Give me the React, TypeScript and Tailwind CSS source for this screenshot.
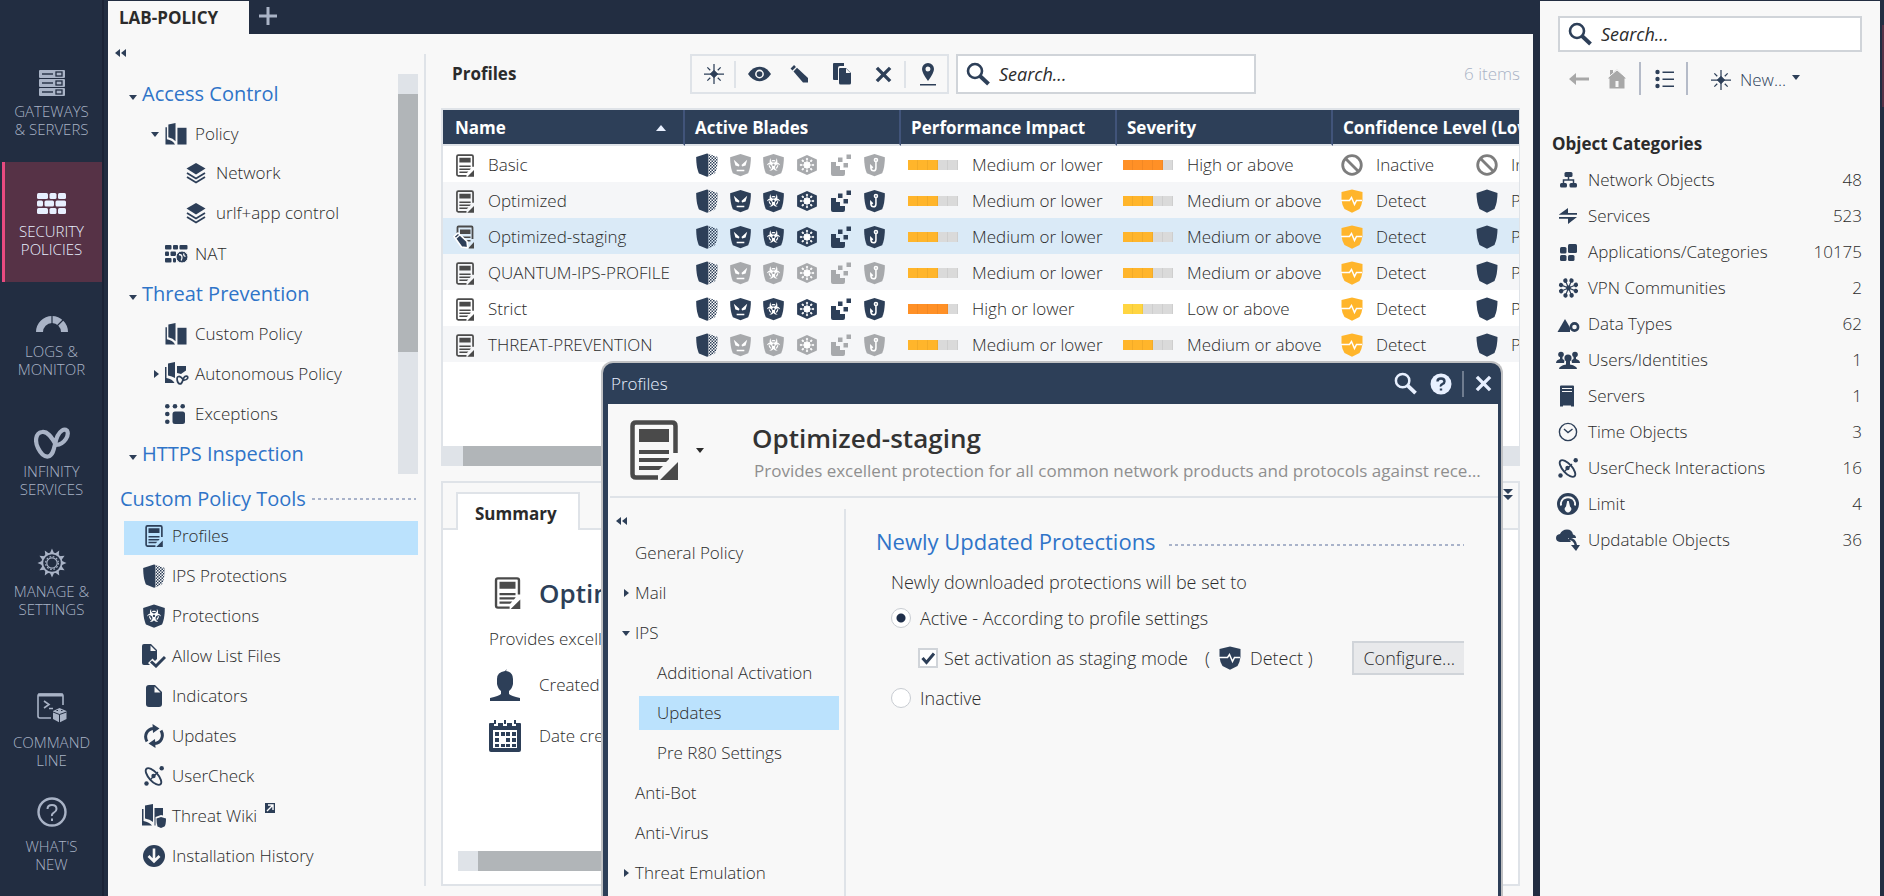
import React, { useState } from "react";
import { FaBiohazard } from "react-icons/fa";

type IconProps = { className?: string };

/* ---------- icons ---------- */

const ArrowDown: React.FC<IconProps> = ({ className = "" }) => (
    <svg viewBox="0 0 8 5" className={`w-2 h-[5px] shrink-0 ${className}`} fill="currentColor"><path d="M0 0h8L4 5z" /></svg>
);

const ArrowRight: React.FC<IconProps> = ({ className = "" }) => (
    <svg viewBox="0 0 5 8" className={`w-[5px] h-2 shrink-0 ${className}`} fill="currentColor"><path d="M0 0v8l5-4z" /></svg>
);

const CollapseIcon = () => (
    <svg viewBox="0 0 11 8" className="w-[11px] h-2" fill="currentColor"><path d="M5 0v8L0 4zM11 0v8L6 4z" /></svg>
);

const DocIcon: React.FC<IconProps> = ({ className = "" }) => (
    <svg viewBox="0 0 48 60" className={`shrink-0 ${className}`} fill="currentColor">
        <path d="M28 57.500H6q-3.500 0-3.500-3.500V6q0-3.500 3.500-3.500H42q3.500 0 3.500 3.500V33" fill="none" stroke="currentColor" strokeWidth="4.500" />
        <path d="M9 9h30v13H9zM9 30h30v4H9zM9 38h30v1l-3 3H9zM9 46h24l-4 4H9zM48 42v18H30z" />
    </svg>
);

const DocEditIcon: React.FC<IconProps> = ({ className = "" }) => (
    <svg viewBox="0 0 22 24" className={`shrink-0 ${className}`} fill="none">
        <path d="M4.500 8V2.500q0-1 1-1h13q1 0 1 1V14" stroke="#4a4a4a" strokeWidth="1.800" />
        <path d="M7 4.500h10.500v4.500H7zM10 11.500h7.500V13H10zM12 15h5.500v1.400H12zM21 17v6.500h-6z" fill="#4a4a4a" />
        <path d="M1 11.500L5 8l9 8.500.8 6.300-6.300-.8z" fill="#2d3f58" stroke="#fff" strokeWidth="1.600" />
        <path d="M2.800 13.500L7 9.800" stroke="#fff" strokeWidth="1.200" />
    </svg>
);

const SHIELD = "M12 .5 22.800 4C22.800 12 21.500 17.500 20 20.500L12 23.800 4 20.500C2.500 17.500 1.200 12 1.200 4z";

const IpsIcon: React.FC<IconProps> = ({ className = "" }) => (
    <svg viewBox="0 0 24 24" className={`w-6 h-6 shrink-0 ${className}`} fill="#2d3f58">
        <defs>
            <pattern id="ipsDots" width="3" height="3" patternUnits="userSpaceOnUse">
                <rect width="1.500" height="1.500" />
                <rect x="1.500" y="1.500" width="1.500" height="1.500" />
            </pattern>
        </defs>
        <path d="M13 .8V23.500L12 23.800 4 20.500C2.500 17.500 1.200 12 1.200 4L12 .5z" />
        <path d="M13 .8 22.800 4C22.800 12 21.500 17.500 20 20.500L13 23.500z" fill="url(#ipsDots)" />
    </svg>
);

const BotIcon: React.FC<IconProps> = ({ className = "" }) => (
    <svg viewBox="0 0 24 24" className={`shrink-0 ${className}`} fill="currentColor">
        <path d={SHIELD} />
        <path d="M5 6.500l6 5.500-.8 1.500-3.500-1zM19 6.500l-6 5.500.8 1.500 3.500-1zM8 17h8v1.600H8z" fill="#fff" />
    </svg>
);

const BioIcon: React.FC<IconProps> = ({ className = "" }) => (
    <svg viewBox="0 0 24 24" className={`shrink-0 ${className}`} fill="currentColor">
        <path d={SHIELD} />
        <g className="text-white"><FaBiohazard x={5} y={4.500} size={14} /></g>
    </svg>
);

const RAYS = [0, 45, 90, 135, 180, 225, 270, 315];

const EmulationIcon: React.FC<IconProps> = ({ className = "" }) => (
    <svg viewBox="0 0 24 24" className={`shrink-0 ${className}`} fill="currentColor">
        <path d="M12 1 22.800 6v12L12 23 1.200 18V6z" />
        <g fill="#fff" stroke="#fff">
            <circle cx="12" cy="12" r="3.400" />
            {RAYS.map((a) => (
                <g key={a} transform={`rotate(${a} 12 12)`}>
                    <path d="M12 9V6" strokeWidth=".8" />
                    <circle cx="12" cy="5.400" r=".8" />
                </g>
            ))}
        </g>
    </svg>
);

const ExtractionIcon: React.FC<IconProps> = ({ className = "" }) => (
    <svg viewBox="0 0 24 24" className={`shrink-0 ${className}`} fill="currentColor">
        <path d="M2 9h5v4h4v4h5v4q0 2-2 2H4q-2 0-2-2zM9 4.500h4.500V9H9zM17.500 1.500h4.500V6h-4.500zM14.500 10h4.500v4.500h-4.500z" />
    </svg>
);

const PhishingIcon: React.FC<IconProps> = ({ className = "" }) => (
    <svg viewBox="0 0 24 24" className={`shrink-0 ${className}`} fill="currentColor">
        <path d={SHIELD} />
        <g fill="none" stroke="#fff" strokeWidth="1.600">
            <circle cx="13.500" cy="6.800" r="1.600" />
            <path d="M13.500 8.500V15q0 3-2.500 3t-2.800-3V13l2 2" />
        </g>
    </svg>
);

const DetectIcon: React.FC<IconProps> = ({ className = "" }) => (
    <svg viewBox="0 0 24 24" className={`shrink-0 ${className}`} fill="currentColor">
        <path d="M12 .5 22.500 3V11q-.6 5-3 9L12 23.800 4.500 20Q2 16 1.500 11V3z" />
        <path d="M1 11.500h8.500l2-3 3 7 2-4H22" fill="none" stroke="#fff" strokeWidth="1.500" />
    </svg>
);

const PreventIcon: React.FC<IconProps> = ({ className = "" }) => (
    <svg viewBox="0 0 24 24" className={`shrink-0 ${className}`} fill="currentColor">
        <path d="M12 .5 22.500 4q0 9-3 16L12 23.800 4.500 20q-3-7-3-16z" />
    </svg>
);

const InactiveIcon: React.FC<IconProps> = ({ className = "" }) => (
    <svg viewBox="0 0 24 24" className={`shrink-0 ${className}`} fill="none" stroke="currentColor" strokeWidth="2.800">
        <circle cx="12" cy="12" r="9.300" /><path d="M5.500 5.500l13 13" />
    </svg>
);

const SearchIcon: React.FC<IconProps> = ({ className = "" }) => (
    <svg viewBox="0 0 24 24" className={`shrink-0 ${className}`} fill="none" stroke="currentColor">
        <circle cx="9" cy="9" r="7" strokeWidth="2.600" /><path d="M14 14l8.500 8" strokeWidth="4" />
    </svg>
);

const StarIcon: React.FC<IconProps> = ({ className = "" }) => (
    <svg viewBox="0 0 24 24" className={`shrink-0 ${className}`} fill="currentColor" stroke="currentColor">
        <path d="M12 7.500l4.500 4.500-4.500 4.500L7.500 12z" strokeWidth="1" strokeLinejoin="round" />
        <path d="M12 0v24M0 12h24M4 4l3.500 3.500M16.500 16.500L20 20M20 4l-3.500 3.500M7.500 16.500L4 20" strokeWidth="1.500" />
    </svg>
);

const EyeIcon = () => (
    <svg viewBox="0 0 24 16" className="w-[23px] h-4" fill="currentColor">
        <path d="M0 8q5-7.500 12-7.500T24 8q-5 7.500-12 7.500T0 8z" />
        <circle cx="12" cy="8" r="3.800" fill="none" stroke="#f8f8f8" strokeWidth="1.600" />
    </svg>
);

const PencilIcon = () => (
    <svg viewBox="0 0 20 20" className="w-5 h-5" fill="currentColor">
        <path d="M7 3.800L18 14v4.500h-5L3.500 7.500z" />
        <path d="M1.500 5.500L5 2" stroke="currentColor" strokeWidth="2.600" />
    </svg>
);

const CopyIcon = () => (
    <svg viewBox="0 0 20 22" className="w-5 h-[22px]" fill="currentColor">
        <path d="M2 0h10v3H8Q6 3 6 5v12H2q-1 0-1-1V1q0-1 1-1z" />
        <path d="M8 5h6l5 5v10q0 1.500-1.500 1.500h-9Q7 21.500 7 20V6q0-1 1-1z" />
        <path d="M14 5.500V10h4.500z" fill="#f8f8f8" />
    </svg>
);

const CloseIcon: React.FC<IconProps> = ({ className = "" }) => (
    <svg viewBox="0 0 18 18" className={`shrink-0 ${className}`} stroke="currentColor" strokeWidth="3.600"><path d="M2 2l14 14M16 2L2 16" /></svg>
);

const PinIcon = () => (
    <svg viewBox="0 0 16 24" className="w-4 h-6" fill="currentColor">
        <path fillRule="evenodd" d="M8 1a6 6 0 0 1 6 6q0 4-6 12Q2 11 2 7a6 6 0 0 1 6-6zm0 3.500a2.500 2.500 0 1 0 0 5 2.500 2.500 0 0 0 0-5z" />
        <path d="M0 22h16v1.500H0z" />
    </svg>
);

const BookIcon: React.FC<IconProps> = ({ className = "" }) => (
    <svg viewBox="0 0 22 23" className={`w-[22px] h-[22px] shrink-0 ${className}`} fill="currentColor">
        <path d="M0 4.500h1.500V17q6 1 8.500 5.500H0zM3 1.500L10.500 0v19Q8 16 3 15z" /><path d="M12.500 5H22v17.500h-9.500z" />
    </svg>
);

const BookInfinityIcon = () => (
    <svg viewBox="0 0 24 24" className="w-6 h-6 shrink-0" fill="currentColor">
        <path d="M0 5h1.500v11q6 1 8 5H0zM3 1.500L10 0v16Q7 14 3 13.500zM12 4h9v4.500l-5 3.500-4-1z" />
        <path d="M18.500 18q-3-4-5-3.500c-2.500.500-1.500 7 1.500 7.500 2.500 0 2.500-4 4-6.500 1-1.500 3.500-2 3.800-.3.200 1.800-2 3-4.300 2.800z" fill="none" stroke="currentColor" strokeWidth="1.700" />
    </svg>
);

const BookShieldIcon = () => (
    <svg viewBox="0 0 24 24" className="w-6 h-6 shrink-0" fill="currentColor">
        <path d="M0 5h1.500v12q6 1 8.500 4.500H0zM3 1.500L11 0v18q-3-3-8-3.500zM12.500 4H21v7.500L19 11l-5.500 2v8.500h-1z" />
        <path d="M19 13l5 1.500q0 6-1.500 8L19 24l-3.500-1.500Q14.500 20 14.500 14.500z" />
    </svg>
);

const LayersIcon: React.FC<IconProps> = ({ className = "" }) => (
    <svg viewBox="0 0 20 21" className={`w-5 h-[21px] shrink-0 ${className}`} fill="currentColor">
        <path d="M10 0l9.500 5.500L10 11.500.5 5.500z" />
        <path d="M1 10l9 5.500 9-5.500M1 14l9 5.500 9-5.500" fill="none" stroke="currentColor" strokeWidth="1.800" />
    </svg>
);

const NatIcon = () => (
    <svg viewBox="0 0 23 18" className="w-[23px] h-[18px] shrink-0" fill="currentColor">
        <rect width="6.500" height="4.500" rx="1" /><rect x="8" width="5" height="4.500" rx="1" /><rect x="14.500" width="8" height="4.500" rx="1" />
        <rect y="6.500" width="4" height="4.500" rx="1" /><rect x="5.500" y="6.500" width="5.500" height="4.500" rx="1" />
        <rect y="13" width="6.500" height="4.500" rx="1" /><rect x="8" y="13" width="3" height="4.500" rx="1" />
        <circle cx="17" cy="12" r="6" stroke="#f8f8f8" strokeWidth="1" />
        <path d="M14 9.500q3 0 3 2.500t-1 3.500M19 8.500q-1 2 1.500 3" stroke="#f8f8f8" strokeWidth="1.300" fill="none" />
    </svg>
);

const ExceptionsIcon = () => (
    <svg viewBox="0 0 20 20" className="w-5 h-5 shrink-0" fill="currentColor">
        <circle cx="2.300" cy="2.300" r="2.300" /><circle cx="10" cy="2.300" r="2.300" /><circle cx="17.700" cy="2.300" r="2.300" />
        <circle cx="2.300" cy="10" r="2.300" /><circle cx="2.300" cy="17.700" r="2.300" /><rect x="7.500" y="7.500" width="12.500" height="12.500" rx="2.500" />
    </svg>
);

const FileIcon = () => (
    <svg viewBox="0 0 16 22" className="w-4 h-[22px] shrink-0" fill="currentColor">
        <path d="M3 0h6l7 7v12q0 3-3 3H3q-3 0-3-3V3q0-3 3-3z" /><path d="M8.500 1.500V7.500H14.500z" fill="#f8f8f8" />
    </svg>
);

const FileCheckIcon = () => (
    <svg viewBox="0 0 24 24" className="w-6 h-6 shrink-0" fill="currentColor">
        <path d="M2 0h7l6 6v9l-2 2-2.500-2.500L6 19l2 2H2q-2 0-2-2V2q0-2 2-2z" /><path d="M8.500 1.500V7H14z" fill="#f8f8f8" />
        <path d="M9 17.500l5 4.500 9-9" fill="none" stroke="currentColor" strokeWidth="3" />
    </svg>
);

const RefreshIcon = () => (
    <svg viewBox="0 0 20 24" className="w-5 h-6 shrink-0" fill="currentColor">
        <path d="M3 17.500Q.5 13 2.500 9T9 4.500M17 6.500q2.500 4.500.5 8.500T11 19.500" fill="none" stroke="currentColor" strokeWidth="3" />
        <path d="M8.500 0l7 4.500L9 9zM11.500 24l-7-4.500L11 15z" />
    </svg>
);

const UserCheckIcon = () => (
    <svg viewBox="0 0 20 20" className="w-5 h-5 shrink-0" fill="currentColor">
        <g fill="none" stroke="currentColor">
            <ellipse cx="9.500" cy="10.500" rx="10.500" ry="4.500" transform="rotate(48 9.500 10.500)" strokeWidth="1.900" />
            <path d="M6 14L14 6" strokeWidth="1.300" />
        </g>
        <circle cx="2.500" cy="17.500" r="2.200" /><circle cx="9.500" cy="10" r="2.200" /><circle cx="17.700" cy="2.200" r="2.200" />
    </svg>
);

const InstallIcon = () => (
    <svg viewBox="0 0 22 22" className="w-[22px] h-[22px] shrink-0" fill="currentColor">
        <circle cx="11" cy="11" r="11" /><path d="M11 3.500V16M5.500 11l5.500 5.500L16.500 11" fill="none" stroke="#f8f8f8" strokeWidth="2.600" />
    </svg>
);

const ExternalIcon = () => (
    <svg viewBox="0 0 10 10" className="w-[10px] h-[10px] shrink-0">
        <path d="M0 0h10v10H0z" fill="#2d3f58" /><path d="M3 2h5v5M8 2L2 8" fill="none" stroke="#fff" strokeWidth="1.400" />
    </svg>
);

const PersonIcon = () => (
    <svg viewBox="0 0 32 32" className="w-8 h-8 shrink-0" fill="currentColor">
        <path d="M18 0l-1 2q7 1 7 8v5q-1 5-4 7v3q2 2 11 4v3H1v-3q9-2 11-4v-3q-3-2-4-7v-5Q8 3 16 2z" />
    </svg>
);

const CalendarIcon = () => (
    <svg viewBox="0 0 32 32" className="w-8 h-8 shrink-0" fill="currentColor">
        <path d="M0 4q0-1 1-1h4v3h4V3h5v3h4V3h5v3h4V3h4q1 0 1 1v26q0 2-2 2H2q-2 0-2-2z" />
        <path d="M6 0v4M16 0v4M26 0v4" stroke="currentColor" strokeWidth="2" />
        <path d="M4 10h24v18H4z" fill="#fff" />
        <path d="M6 12h4v4H6zM12 12h4v4h-4zM17 12h4v4h-4zM23 12h4v4h-4zM6 18h4v4H6zM17 18h4v4h-4zM23 18h4v4h-4zM6 24h4v3H6zM12 24h4v3h-4zM17 24h4v3h-4zM23 24h4v3h-4z" />
    </svg>
);

const QuestionDisc = () => (
    <svg viewBox="0 0 22 22" className="w-[22px] h-[22px]">
        <circle cx="11" cy="11" r="10.500" fill="#e8f0ff" />
        <path d="M7.500 8.500Q7.500 5.500 11 5.500t3.500 3Q14.500 10 12.500 11T11 13.500M11 15.500v2" fill="none" stroke="#2d3f58" strokeWidth="2.400" />
    </svg>
);

/* ---------- left rail icons ---------- */

const GatewaysIcon = () => (
    <svg viewBox="0 0 26 26" className="w-[26px] h-[26px]" fill="currentColor">
        {[0, 9, 18].map((y) => (
            <g key={y}>
                <rect y={y} width="26" height="8" rx="1" />
                <path d={`M3 ${y + 4}h11`} stroke="#222d41" strokeWidth="1.400" />
                <rect x="17" y={y + 2} width="6" height="4" fill="none" stroke="#222d41" strokeWidth="1.300" />
            </g>
        ))}
    </svg>
);

const WallIcon = () => (
    <svg viewBox="0 0 29 21" className="w-[29px] h-[21px]" fill="currentColor">
        <rect width="11" height="6" rx="1.500" /><rect x="12.500" width="7" height="6" rx="1.500" /><rect x="21" width="8" height="6" rx="1.500" />
        <rect y="7.500" width="6" height="6" rx="1.500" /><rect x="7.500" y="7.500" width="9.500" height="6" rx="1.500" /><rect x="18.500" y="7.500" width="10.500" height="6" rx="1.500" />
        <rect y="15" width="11" height="6" rx="1.500" /><rect x="12.500" y="15" width="7" height="6" rx="1.500" /><rect x="21" y="15" width="8" height="6" rx="1.500" />
    </svg>
);

const GaugeIcon = () => (
    <svg viewBox="0 0 32 17" className="w-8 h-[17px]" fill="currentColor">
        <path d="M0 17A16 16 0 0 1 32 17H25A9 9 0 0 0 7 17z" />
        <path d="M16 0v9M28 4l-7 7" stroke="#222d41" strokeWidth="1.200" />
    </svg>
);

const InfinityIcon = () => (
    <svg viewBox="0 0 36 32" className="w-9 h-8" fill="none" stroke="currentColor" strokeWidth="4.200">
        <path d="M22 18C17 9 13 4 8 5 1 6 1 15 4 21 7 27 10 30 14 29.500 21 28 20 16 23.500 9 26 4 30 1 33 3.500 35.500 8 31 17 22 18z" />
    </svg>
);

const GearIcon = () => (
    <svg viewBox="0 0 30 30" className="w-[30px] h-[30px]" fill="currentColor">
        {[0, 30, 60, 90, 120, 150, 180, 210, 240, 270, 300, 330].map((a) => (
            <path key={a} d="M12.800 5.500L15 .5l2.200 5z" transform={`rotate(${a} 15 15)`} />
        ))}
        <g fill="none" stroke="currentColor">
            <circle cx="15" cy="15" r="9.700" strokeWidth="1.800" />
            <circle cx="15" cy="15" r="6.400" strokeWidth="1.200" strokeDasharray="1.700 1.651" />
            <circle cx="15" cy="15" r="5.200" strokeWidth="1.200" />
        </g>
    </svg>
);

const TerminalIcon = () => (
    <svg viewBox="0 0 30 30" className="w-[30px] h-[30px]" fill="none" stroke="currentColor">
        <path d="M14 25H3q-2 0-2-2V3q0-2 2-2h21q2 0 2 2v9" strokeWidth="1.600" />
        <path d="M1 2h25" strokeWidth="3" />
        <path d="M7 8l5 3.500L7 15M12 15.500h4" strokeWidth="1.600" />
        <path d="M22.500 15l7 3v8l-7 3.500-6.500-3.500v-8z" fill="currentColor" stroke="none" />
        <path d="M16 19l6.500 2.500L29.500 19M22.500 21.500V30M19.500 17.500h1.500M24 17.500h1.500" stroke="#222d41" strokeWidth="1" />
    </svg>
);

const HelpIcon = () => (
    <svg viewBox="0 0 30 30" className="w-[30px] h-[30px]" fill="none" stroke="currentColor">
        <circle cx="15" cy="15" r="13.500" strokeWidth="2.400" />
        <path d="M10.500 12Q10.500 8 15 8t4.500 4q0 2-2.500 3.500T15 19M15 21.500V24" strokeWidth="2" />
    </svg>
);

/* ---------- object category icons ---------- */

const CategoryIcon: React.FC<{ name: string }> = ({ name }) => {
    const cls = "w-6 h-6 shrink-0";
    switch (name) {
        case "network":
            return (
                <svg viewBox="0 0 24 24" className={cls} fill="currentColor">
                    <rect x="8.500" y="4" width="8" height="5" rx="1.500" /><rect x="4" y="15" width="7" height="4.500" rx="1.500" /><rect x="13.500" y="15" width="7.500" height="4.500" rx="1.500" />
                    <path d="M12.500 9v3M7.500 15v-3h10v3" fill="none" stroke="currentColor" strokeWidth="1.500" />
                </svg>
            );
        case "services":
            return (
                <svg viewBox="0 0 24 24" className={cls} fill="currentColor">
                    <path d="M3 10.500L12 4v5h9v1.800H3zM21 13l-9 7v-5.200H3V13z" />
                </svg>
            );
        case "apps":
            return (
                <svg viewBox="0 0 24 24" className={cls} fill="currentColor">
                    <rect x="4" y="7" width="6.500" height="6.500" rx="1.500" /><rect x="12" y="4" width="9" height="9" rx="1.500" />
                    <rect x="4" y="15" width="6.500" height="6" rx="1.500" /><rect x="12" y="15" width="6.500" height="6" rx="1.500" />
                </svg>
            );
        case "vpn":
            return (
                <svg viewBox="0 0 24 24" className={cls} fill="currentColor">
                    <circle cx="12.500" cy="12" r="2.400" />
                    {RAYS.map((a) => (
                        <g key={a} transform={`rotate(${a + 22} 12.500 12)`}>
                            <path d="M12.500 12V5" stroke="currentColor" strokeWidth="1.200" /><circle cx="12.500" cy="4" r="2.200" />
                        </g>
                    ))}
                </svg>
            );
        case "data":
            return (
                <svg viewBox="0 0 24 24" className={cls} fill="currentColor">
                    <path d="M1.500 20L9 7l5 8.500V20z" /><circle cx="18.500" cy="15" r="3.600" fill="none" stroke="currentColor" strokeWidth="2.600" />
                </svg>
            );
        case "users":
            return (
                <svg viewBox="0 0 24 24" className={cls} fill="currentColor">
                    <circle cx="5" cy="6.500" r="2.800" /><circle cx="19" cy="6.500" r="2.800" /><path d="M0 15q0-3 4-4V9h2.500v2q1.500.5 2 1.500L8 15zM24 15q0-3-4-4V9h-2.500v2q-1.500.5-2 1.500L16 15z" />
                    <circle cx="12" cy="10" r="3.600" /><path d="M3 21q0-3 7-4.500V12h4v4.500q7 1.500 7 4.500z" />
                </svg>
            );
        case "servers":
            return (
                <svg viewBox="0 0 24 24" className={cls} fill="currentColor">
                    <path d="M4 2.500q0-1 1-1h12q1 0 1 1v20h-3v-1H7v1H4z" /><path d="M6 4.500h10M6 7.500h10" stroke="#f8f8f8" strokeWidth="1" />
                </svg>
            );
        case "time":
            return (
                <svg viewBox="0 0 24 24" className={cls} fill="none" stroke="currentColor" strokeWidth="1.400">
                    <circle cx="12" cy="12" r="8.600" /><path d="M8 9l4 3.500L16.500 9" />
                </svg>
            );
        case "usercheck":
            return <span className="flex w-6 h-6 shrink-0 items-center justify-center"><UserCheckIcon /></span>;
        case "limit":
            return (
                <svg viewBox="0 0 24 24" className={cls} fill="currentColor">
                    <circle cx="12" cy="12" r="11" />
                    <path d="M5 13.500A7.200 7.200 0 0 1 9.500 5.500M19 13.500A7.200 7.200 0 0 0 14.500 5.500M8 6.500Q12 4 16 6.500" fill="none" stroke="#f8f8f8" strokeWidth="2" />
                    <path d="M11.200 9h1.600l1.200 5.500a3.200 3.200 0 1 1-4 0z" fill="#f8f8f8" />
                </svg>
            );
        default:
            return (
                <svg viewBox="0 0 24 24" className={cls} fill="currentColor">
                    <path d="M4 14Q0 13.500 0 10t4-4q2-4.500 7-4.500t6 5q3 .5 3 3.500H12l3 4z" />
                    <path d="M13 11q6 0 7 7" fill="none" stroke="currentColor" strokeWidth="2.500" /><path d="M15 17h9l-4 6z" />
                </svg>
            );
    }
};

/* ---------- data ---------- */

const railItems = [
    { lines: ["GATEWAYS", "& SERVERS"], icon: <GatewaysIcon />, active: false },
    { lines: ["SECURITY", "POLICIES"], icon: <WallIcon />, active: true },
    { lines: ["LOGS &", "MONITOR"], icon: <GaugeIcon />, active: false },
    { lines: ["INFINITY", "SERVICES"], icon: <InfinityIcon />, active: false },
    { lines: ["MANAGE &", "SETTINGS"], icon: <GearIcon />, active: false },
];

const tools = [
    { label: "Profiles", icon: <DocIcon className="w-[18px] h-[22px]" /> },
    { label: "IPS Protections", icon: <IpsIcon /> },
    { label: "Protections", icon: <BioIcon className="w-6 h-6" /> },
    { label: "Allow List Files", icon: <FileCheckIcon /> },
    { label: "Indicators", icon: <FileIcon /> },
    { label: "Updates", icon: <RefreshIcon /> },
    { label: "UserCheck", icon: <UserCheckIcon /> },
    { label: "Threat Wiki", icon: <BookShieldIcon />, external: true },
    { label: "Installation History", icon: <InstallIcon /> },
];

const profiles = [
    { name: "Basic", blades: false, impact: "Medium", severity: "High", confidence: "Inactive" },
    { name: "Optimized", blades: true, impact: "Medium", severity: "Medium", confidence: "Detect" },
    { name: "Optimized-staging", blades: true, impact: "Medium", severity: "Medium", confidence: "Detect" },
    { name: "QUANTUM-IPS-PROFILE", blades: false, impact: "Medium", severity: "Medium", confidence: "Detect" },
    { name: "Strict", blades: true, impact: "High", severity: "Low", confidence: "Detect" },
    { name: "THREAT-PREVENTION", blades: false, impact: "Medium", severity: "Medium", confidence: "Detect" },
];

const categories = [
    { label: "Network Objects", count: 48, icon: "network" },
    { label: "Services", count: 523, icon: "services" },
    { label: "Applications/Categories", count: 10175, icon: "apps" },
    { label: "VPN Communities", count: 2, icon: "vpn" },
    { label: "Data Types", count: 62, icon: "data" },
    { label: "Users/Identities", count: 1, icon: "users" },
    { label: "Servers", count: 1, icon: "servers" },
    { label: "Time Objects", count: 3, icon: "time" },
    { label: "UserCheck Interactions", count: 16, icon: "usercheck" },
    { label: "Limit", count: 4, icon: "limit" },
    { label: "Updatable Objects", count: 36, icon: "updatable" },
];

const levels: Record<string, { filled: number; on: string }> = {
    Low: { filled: 2, on: "bg-[#ffd541]" },
    Medium: { filled: 3, on: "bg-[#ffb52b]" },
    High: { filled: 4, on: "bg-[#ff9026]" },
};

/* ---------- parts ---------- */

const LevelBar: React.FC<{ level: string }> = ({ level }) => (
    <span className="flex shrink-0">
        {[0, 1, 2, 3, 4].map((i) => (
            <span key={i} className={`w-[10px] h-[10px] border-r border-black/5 ${i < levels[level].filled ? levels[level].on : "bg-[#dadada]"}`} />
        ))}
    </span>
);

const Dots: React.FC<IconProps> = ({ className = "" }) => (
    <span className={`h-[2px] flex-1 bg-[repeating-linear-gradient(90deg,#a9b3ca_0_3px,transparent_3px_6px)] ${className}`} />
);

const SearchBox: React.FC<{ id: string; className?: string }> = ({ id, className = "" }) => (
    <label htmlFor={id} className={`flex items-center gap-2 border-2 border-[#d0d4d9] bg-white pl-2 text-[#2d3f58] ${className}`}>
        <SearchIcon className="w-6 h-6" />
        <input id={id} type="text" placeholder="Search..." className="min-w-0 flex-1 bg-transparent pl-px text-lg font-normal italic text-[#2b2b2b] outline-none placeholder:text-[#2b2b2b]" />
    </label>
);

const RailButton: React.FC<{ lines: string[]; icon: React.ReactNode; active?: boolean; className?: string; iconClass?: string }> = ({ lines, icon, active, className = "h-[120px]", iconClass = "h-[60px] pt-[22px]" }) => (
    <button className={`flex w-[100px] shrink-0 flex-col items-center border-l-[3px] pr-1 text-[15px] leading-[18px] ${className}
        ${active ? "border-[#e84b80] bg-[#563246] text-[#e8f0ff]" : "border-transparent text-[#a9b3c6]"}`}>
        <span className={`flex items-center justify-center ${iconClass}`}>{icon}</span>
        <span>{lines[0]}<br />{lines[1]}</span>
    </button>
);

const TreeHeading: React.FC<{ label: string }> = ({ label }) => (
    <button className="flex h-10 w-full items-center gap-[5px] pl-[21px] text-left text-xl font-normal text-[#2f74c8]">
        <ArrowDown className="mt-[6px] text-[#2d3f58]" />{label}
    </button>
);

const TreeItem: React.FC<{ label: string; icon: React.ReactNode; arrow?: "down" | "right"; nested?: boolean }> = ({ label, icon, arrow, nested }) => (
    <button className={`flex h-10 w-full items-center text-left ${nested ? "pl-[64px] pb-[2px]" : "pl-[43px]"}`}>
        <span className="flex w-[14px] shrink-0 text-[#2d3f58]">
            {arrow === "down" && <ArrowDown />}
            {arrow === "right" && <ArrowRight className="ml-[3px]" />}
        </span>
        <span className="flex w-[30px] shrink-0 text-[#2d3f58]">{icon}</span>
        {label}
    </button>
);

const PolicySidebar = () => (
    <aside className="flex w-[318px] shrink-0 flex-col">
        <div className="mt-5 mb-[10px] flex min-h-0 flex-1 flex-col border-r-2 border-[#dfe3e8]">
            <div className="h-5 shrink-0 pl-[7px] text-[#2d3f58]">
                <button aria-label="Collapse" className="-mt-[5px] flex"><CollapseIcon /></button>
            </div>
            <div className="flex shrink-0 pr-[6px]">
                <nav className="flex-1">
                    <TreeHeading label="Access Control" />
                    <TreeItem label="Policy" arrow="down" icon={<BookIcon />} />
                    <TreeItem label="Network" nested icon={<LayersIcon />} />
                    <TreeItem label="urlf+app control" nested icon={<LayersIcon />} />
                    <TreeItem label="NAT" icon={<NatIcon />} />
                    <TreeHeading label="Threat Prevention" />
                    <TreeItem label="Custom Policy" icon={<BookIcon />} />
                    <TreeItem label="Autonomous Policy" arrow="right" icon={<BookInfinityIcon />} />
                    <TreeItem label="Exceptions" icon={<ExceptionsIcon />} />
                    <TreeHeading label="HTTPS Inspection" />
                </nav>
                <div className="w-5 bg-[#dfe3e8] pt-5"><div className="h-[68%] bg-[#b1b5b8]" /></div>
            </div>
            <div className="flex h-[47px] shrink-0 items-center gap-[6px] pl-3 pr-2 pt-[2px]">
                <h2 className="text-xl font-normal text-[#2f74c8]">Custom Policy Tools</h2>
                <Dots />
            </div>
            <ul className="flex flex-col gap-[6px] pl-4 pr-[6px]">
                {tools.map((t, i) => (
                    <li key={t.label}>
                        <button className={`flex h-[34px] w-full items-center pl-[18px] pb-1 text-left ${i === 0 ? "bg-[#bbe2fd]" : ""}`}>
                            <span className="mr-[6px] flex w-6 shrink-0 justify-center text-[#2d3f58]">{t.icon}</span>
                            {t.label}
                            {t.external && <span className="ml-2 mb-4"><ExternalIcon /></span>}
                        </button>
                    </li>
                ))}
            </ul>
        </div>
    </aside>
);

const ProfilesTable = () => (
    <div className="h-[358px] shrink-0 flex flex-col overflow-hidden border-t-2 border-l-2 border-r border-[#dfe3e8] bg-white">
        <table className="w-[1400px] table-fixed border-separate border-spacing-0 whitespace-nowrap">
            <thead>
                <tr className="h-9 bg-[#2d3f58] text-left text-white [&>th]:border-b-2 [&>th]:border-b-[#dfe3e8] [&>th]:border-r-2 [&>th]:border-r-[#41547a] [&>th]:pt-[2px] [&>th]:pl-[10px] [&>th]:font-bold">
                    <th className="w-[242px]">
                        <span className="flex items-center justify-between pr-[17px] pl-[2px]">Name<svg viewBox="0 0 10 6" className="w-[10px] h-[6px]" fill="#e8f0ff"><path d="M0 6h10L5 0z" /></svg></span>
                    </th>
                    <th className="w-[216px]">Active Blades</th>
                    <th className="w-[216px]">Performance Impact</th>
                    <th className="w-[216px]">Severity</th>
                    <th>Confidence Level (Low / Medium / High)</th>
                </tr>
            </thead>
            <tbody>
                {profiles.map((p, i) => (
                    <tr key={p.name} className={`h-9 [&>td]:pt-[2px] ${i === 2 ? "bg-[#daeaf7]" : i % 2 ? "bg-[#f5f6f8]" : "bg-white"}`}>
                        <td className="pl-[13px]">
                            <span className="flex items-center">
                                <span className="flex w-8 shrink-0 text-[#4a4a4a]">
                                    {i === 2 ? <DocEditIcon className="-ml-[3px] w-[22px] h-6" /> : <DocIcon className="w-[18px] h-[23px]" />}
                                </span>
                                {p.name}
                            </span>
                        </td>
                        <td className="pl-[10px]">
                            <span className={`flex items-center gap-[10px] ${p.blades ? "text-[#2d3f58]" : "text-[#a7a9ac]"}`}>
                                <IpsIcon />
                                <BotIcon className="w-[23px] h-6" />
                                <BioIcon className="w-[23px] h-6" />
                                <EmulationIcon className="w-6 h-[22px]" />
                                <ExtractionIcon className="w-6 h-6" />
                                <PhishingIcon className="w-[23px] h-6" />
                            </span>
                        </td>
                        <td className="pl-[7px]"><span className="flex items-center gap-[14px]"><LevelBar level={p.impact} />{p.impact} or lower</span></td>
                        <td className="pl-[6px]"><span className="flex items-center gap-[14px]"><LevelBar level={p.severity} />{p.severity} or above</span></td>
                        <td className="pl-[7px]">
                            <span className="flex items-center">
                                {p.confidence === "Inactive" ? <InactiveIcon className="w-6 h-6 text-[#7d7d7d]" /> : <DetectIcon className="w-6 h-6 text-[#ffb52b]" />}
                                <span className="ml-3 w-[99px]">{p.confidence}</span>
                                {p.confidence === "Inactive" ? <InactiveIcon className="w-6 h-6 text-[#7d7d7d]" /> : <PreventIcon className="w-6 h-6 text-[#2d3f58]" />}
                                <span className="ml-3">{p.confidence === "Inactive" ? "Inactive" : "Prevent"}</span>
                            </span>
                        </td>
                    </tr>
                ))}
            </tbody>
        </table>
        <div className="mt-auto h-5 shrink-0 bg-[#dfe3e8] px-5"><div className="h-full w-4/5 bg-[#b1b5b8]" /></div>
    </div>
);

const SummaryPanel = () => (
    <section className="mt-[15px] mb-[10px] flex min-h-0 flex-1 flex-col border-2 border-[#dfe3e8] bg-white">
        <div className="flex h-[47px] shrink-0 items-end bg-[#f8f8f8]">
            <span className="w-[13px] border-b-2 border-[#dfe3e8]" />
            <button className="h-[38px] w-[124px] border-2 border-b-0 border-[#dfe3e8] bg-white pl-[17px] pt-1 text-left font-bold text-[#2b2b2b]">Summary</button>
            <button className="h-[38px] border-b-2 border-[#dfe3e8] px-5 text-[#6b6b6b]">Logs</button>
            <span className="flex h-full flex-1 items-start justify-end border-b-2 border-[#dfe3e8] pr-[5px] pt-[6px] text-[#2d3f58]">
                <svg viewBox="0 0 10 11" className="w-[10px] h-[11px]" fill="currentColor"><path d="M0 0h10L5 5zM0 6h10l-5 5z" /></svg>
            </span>
        </div>
        <div className="flex flex-1 px-[46px] pt-[41px]">
            <div className="flex flex-1 flex-col">
                <div className="flex h-11 items-center gap-[18px] pl-[5px]">
                    <DocIcon className="w-[27px] h-8 text-[#4a4a4a]" />
                    <h3 className="text-[26px] leading-8 font-semibold text-[#2d3f58]">Optimized-staging</h3>
                </div>
                <p className="pt-3 leading-6">Provides excellent protection for all common network products</p>
                <div className="mt-[18px] flex h-8 items-center gap-[18px] text-[#2d3f58]"><PersonIcon /><span className="text-[#2b2b2b]">Created by admin</span></div>
                <div className="mt-[19px] flex h-8 items-center gap-[18px] text-[#2d3f58]"><CalendarIcon /><span className="text-[#2b2b2b]">Date created</span></div>
            </div>
        </div>
        <div className="mx-[15px] mb-[13px] h-5 bg-[#dfe3e8] px-5"><div className="h-full bg-[#b1b5b8]" /></div>
    </section>
);

const dialogItems = [
    { label: "General Policy" },
    { label: "Mail", arrow: "right" },
    { label: "IPS", arrow: "down" },
    { label: "Additional Activation", child: true },
    { label: "Updates", child: true, selected: true },
    { label: "Pre R80 Settings", child: true },
    { label: "Anti-Bot" },
    { label: "Anti-Virus" },
    { label: "Threat Emulation", arrow: "right" },
];

const ProfileDialog = () => {
    const [mode, setMode] = useState("active");
    const [staging, setStaging] = useState(true);

    return (
        <div role="dialog" aria-label="Profiles" className="absolute left-[493px] right-[30px] top-[327px] bottom-0 flex flex-col rounded-t-xl border-2 border-b-0 border-[#c0c1c3] bg-[#2d3f58]">
            <div className="flex h-[41px] shrink-0 items-center pl-2 pr-2 text-[#e8f0ff]">
                <span className="flex-1">Profiles</span>
                <button aria-label="Find"><SearchIcon className="w-[23px] h-[23px]" /></button>
                <button aria-label="Help" className="ml-[13px]"><QuestionDisc /></button>
                <span className="mx-[10px] h-[26px] w-[2px] bg-[#6f7c8f]" />
                <button aria-label="Close" className="p-px"><CloseIcon className="w-[17px] h-[17px]" /></button>
            </div>
            <div className="ml-[5px] mr-[3px] flex min-h-0 flex-1 flex-col bg-[#f8f8f8]">
                <header className="ml-[2px] flex h-[94px] shrink-0 items-start border-b-2 border-[#dfe3e8] pl-5 pt-4">
                    <DocIcon className="w-12 h-[60px] text-[#4a4a4a]" />
                    <ArrowDown className="mt-7 ml-[18px] text-[#2b2b2b]" />
                    <div className="ml-12 min-w-0 flex-1 pr-4">
                        <h2 className="text-[26px] leading-9 font-semibold text-[#333]">Optimized-staging</h2>
                        <p className="pl-[2px] leading-[30px] font-normal truncate text-[#8f8f8f]">Provides excellent protection for all common network products and protocols against recent or popular attacks</p>
                    </div>
                </header>
                <div className="flex min-h-0 flex-1">
                    <nav className="mt-[11px] w-[238px] shrink-0 overflow-hidden border-r-2 border-[#dfe3e8]">
                        <button aria-label="Collapse" className="flex h-6 items-center pl-2 text-[#2d3f58]"><CollapseIcon /></button>
                        {dialogItems.map((item) => (
                            <div key={item.label} className={`flex h-10 items-center ${item.child ? "pl-[31px] pr-[5px]" : "pl-[14px]"}`}>
                                {!item.child && (
                                    <span className="flex w-[13px] shrink-0 text-[#2d3f58]">
                                        {item.arrow === "down" && <ArrowDown />}
                                        {item.arrow === "right" && <ArrowRight className="ml-[2px]" />}
                                    </span>
                                )}
                                <button className={`h-[34px] flex-1 pb-px text-left ${item.child ? "pl-[18px]" : ""} ${item.selected ? "bg-[#bbe2fd]" : ""}`}>{item.label}</button>
                            </div>
                        ))}
                    </nav>
                    <section className="min-w-0 flex-1 pl-[30px] pr-[34px] pt-[25px] text-lg">
                        <div className="flex items-center gap-[13px]">
                            <h3 className="text-[22px] leading-9 font-normal text-[#2f74c8]">Newly Updated Protections</h3>
                            <Dots className="mt-2" />
                        </div>
                        <div className="pl-[15px]">
                            <p className="mt-[5px] leading-9">Newly downloaded protections will be set to</p>
                            <label className="flex h-9 items-center gap-[9px]">
                                <input type="radio" name="mode" checked={mode === "active"} onChange={() => setMode("active")}
                                    className="w-5 h-5 appearance-none rounded-full border border-[#c8ccd2] bg-white checked:bg-[radial-gradient(circle,#1f2f4a_0_4px,#fff_5px)]" />
                                Active - According to profile settings
                            </label>
                            <div className="flex h-11 items-center pl-[27px]">
                                <label className="flex items-center gap-[6px]">
                                    <span className="grid">
                                        <input type="checkbox" checked={staging} onChange={() => setStaging(!staging)}
                                            className="peer col-start-1 row-start-1 w-5 h-5 appearance-none border-2 border-[#d0d4d9] bg-white" />
                                        <svg viewBox="0 0 20 20" className="invisible pointer-events-none col-start-1 row-start-1 w-5 h-5 text-[#2d3f58] peer-checked:visible" fill="none" stroke="currentColor" strokeWidth="3"><path d="M4.500 10l4 4.500L16 5.500" /></svg>
                                    </span>
                                    Set activation as staging mode
                                </label>
                                <span className="ml-[17px] flex items-center">
                                    (<DetectIcon className="mx-2 w-6 h-6 text-[#2d3f58]" />Detect )
                                </span>
                                <button className="ml-auto h-[34px] border-2 border-r-0 border-[#d0d4d9] bg-[#e8e9eb] px-[9px]">Configure...</button>
                            </div>
                            <label className="flex h-9 items-center gap-[9px]">
                                <input type="radio" name="mode" checked={mode === "inactive"} onChange={() => setMode("inactive")}
                                    className="w-5 h-5 appearance-none rounded-full border border-[#c8ccd2] bg-white checked:bg-[radial-gradient(circle,#1f2f4a_0_4px,#fff_5px)]" />
                                Inactive
                            </label>
                        </div>
                    </section>
                </div>
            </div>
        </div>
    );
};

const ObjectsPanel = () => (
    <aside className="mt-px flex w-[340px] shrink-0 flex-col bg-[#f8f8f8] pl-3 pr-[18px] pt-[15px]">
        <SearchBox id="object-search" className="ml-[6px] h-9" />
        <div className="mt-[10px] flex h-[33px] items-center pl-[17px] text-[#2d3f58]">
            <button aria-label="Back"><svg viewBox="0 0 20 12" className="w-5 h-3" fill="#a8a8a8"><path d="M0 6l7-6v4.500h13v3H7V12z" /></svg></button>
            <button aria-label="Home" className="ml-[18px]">
                <svg viewBox="0 0 20 22" className="w-5 h-[22px]" fill="#a8a8a8">
                    <path d="M3 2h3v3L10 1.500l9 9H17.500V20.500h-15V10.500H1L3 8z" />
                    <path d="M1.500 9L10 2l8.500 7" fill="none" stroke="#f8f8f8" strokeWidth="1" /><path d="M8.500 13h3v6h-3z" fill="#f8f8f8" />
                </svg>
            </button>
            <span className="ml-3 h-full w-[2px] bg-[#b5bbc8]" />
            <button aria-label="List view" className="ml-[14px]">
                <svg viewBox="0 0 19 20" className="w-[19px] h-5" fill="currentColor">
                    <circle cx="2.500" cy="3" r="2.200" /><circle cx="2.500" cy="10" r="2.200" /><circle cx="2.500" cy="17" r="2.200" />
                    <path d="M7.500 2.500H19V4H7.500zM7.500 9.500H19V11H7.500zM7.500 16.500H19V18H7.500z" />
                </svg>
            </button>
            <span className="ml-3 h-full w-[2px] bg-[#b5bbc8]" />
            <button className="ml-[23px] flex items-center pt-[2px]"><StarIcon className="mr-[9px] w-5 h-5" />New...<ArrowDown className="ml-[6px] mb-1" /></button>
        </div>
        <h2 className="mt-9 leading-[26px] font-bold text-[#2b2b2b]">Object Categories</h2>
        <ul className="mt-[5px]">
            {categories.map((c) => (
                <li key={c.label} className="flex h-9 items-center pl-1">
                    <span className="text-[#2d3f58]"><CategoryIcon name={c.icon} /></span>
                    <span className="ml-2 flex-1">{c.label}</span>
                    <span>{c.count}</span>
                </li>
            ))}
        </ul>
    </aside>
);

const App = () => (
    <div className="flex h-screen overflow-hidden bg-[#222d41] font-['Open_Sans','Noto_Sans',sans-serif] text-[17px] font-light text-[#2b2b2b]">
        <nav className="mr-1 flex w-[104px] shrink-0 flex-col border-r-2 border-[#1b2336] pl-[2px] pt-[42px]">
            {railItems.map((r) => <RailButton key={r.lines[0]} lines={r.lines} icon={r.icon} active={r.active} />)}
            <RailButton lines={["COMMAND", "LINE"]} icon={<TerminalIcon />} className="mt-[41px] h-[104px]" iconClass="h-[50px] pb-[1px]" />
            <RailButton lines={["WHAT'S", "NEW"]} icon={<HelpIcon />} className="h-[104px]" iconClass="h-[50px] pb-[1px]" />
        </nav>

        <div className="flex min-w-0 flex-1 flex-col">
            <div className="flex h-[34px] shrink-0 pt-px">
                <button className="w-[141px] bg-[#f8f8f8] pl-[11px] text-left font-bold">LAB-POLICY</button>
                <button aria-label="New tab" className="ml-[10px] mb-1 text-[#a9b3c6]">
                    <svg viewBox="0 0 18 18" className="w-[18px] h-[18px]" stroke="currentColor" strokeWidth="3"><path d="M9 0v18M0 9h18" /></svg>
                </button>
            </div>
            <main className="relative flex min-h-0 flex-1 bg-[#f8f8f8]">
                <PolicySidebar />
                <div className="flex min-w-0 flex-1 flex-col pl-[15px] pr-[13px]">
                    <div className="flex h-[74px] shrink-0 items-start pt-5">
                        <h1 className="w-[249px] shrink-0 pl-[11px] leading-[40px] font-bold">Profiles</h1>
                        <div className="flex h-10 w-[259px] shrink-0 items-center border-2 border-[#dfe3e8] pl-3 text-[#2d3f58]">
                            <button aria-label="New"><StarIcon className="w-5 h-5" /></button>
                            <span className="ml-[10px] h-[27px] w-[2px] bg-[#dfe3e8]" />
                            <button aria-label="View" className="ml-3"><EyeIcon /></button>
                            <button aria-label="Edit" className="ml-[19px]"><PencilIcon /></button>
                            <button aria-label="Clone" className="ml-[22px]"><CopyIcon /></button>
                            <button aria-label="Delete" className="ml-[23px]"><CloseIcon className="w-[17px] h-[17px]" /></button>
                            <span className="ml-3 h-[27px] w-[2px] bg-[#dfe3e8]" />
                            <button aria-label="Where used" className="ml-[14px]"><PinIcon /></button>
                        </div>
                        <SearchBox id="profile-search" className="ml-[7px] h-10 w-[300px]" />
                        <span className="ml-auto leading-[40px] text-[#a9b3c6]">6 items</span>
                    </div>
                    <ProfilesTable />
                    <SummaryPanel />
                </div>
                <ProfileDialog />
            </main>
        </div>

        <div className="w-[7px] shrink-0" />
        <ObjectsPanel />
        <div className="flex w-1 shrink-0 justify-end pt-[25px]"><span className="h-[82px] w-[2px] bg-[#563246]" /></div>
    </div>
);

export default App;
